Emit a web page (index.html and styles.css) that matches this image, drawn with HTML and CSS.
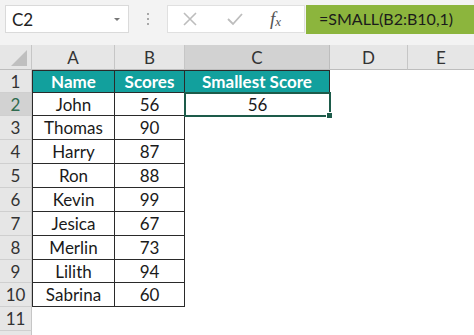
FILE: index.html
```html
<!DOCTYPE html>
<html lang="en">
<head>
    <meta charset="UTF-8">
    <title>SMALL function</title>
    <link rel="stylesheet" href="styles.css">
</head>
<body>
<div class="formula-bar">
    <div class="name-box">
        <span>C2</span>
        <span class="caret"></span>
    </div>
    <div class="grip"><i></i><i></i><i></i></div>
    <div class="fx-box">
        <svg class="icon" width="16" height="16" viewBox="0 0 16 16"><path d="M2 2 L14 14 M14 2 L2 14" stroke="#bdbdbd" stroke-width="1.6" fill="none"/></svg>
        <svg class="icon" width="18" height="16" viewBox="0 0 18 16"><path d="M2 8 L7 13 L16 3" stroke="#bdbdbd" stroke-width="1.8" fill="none"/></svg>
        <span class="fx">f<sub>x</sub></span>
    </div>
    <div class="formula">=SMALL(B2:B10,1)</div>
</div>

<div class="sheet">
    <div class="corner"><span></span></div>
    <div class="col-head">A</div>
    <div class="col-head">B</div>
    <div class="col-head active">C</div>
    <div class="col-head">D</div>
    <div class="col-head last">E</div>

    <div class="row-head">1</div>
    <div class="cell th first top">Name</div>
    <div class="cell th top">Scores</div>
    <div class="cell th top">Smallest Score</div>
    <div class="cell"></div>
    <div class="cell"></div>

    <div class="row-head active">2</div>
    <div class="cell td first">John</div>
    <div class="cell td">56</div>
    <div class="cell td selected">56</div>
    <div class="cell"></div>
    <div class="cell"></div>

    <div class="row-head">3</div>
    <div class="cell td first">Thomas</div>
    <div class="cell td">90</div>
    <div class="cell"></div><div class="cell"></div><div class="cell"></div>

    <div class="row-head">4</div>
    <div class="cell td first">Harry</div>
    <div class="cell td">87</div>
    <div class="cell"></div><div class="cell"></div><div class="cell"></div>

    <div class="row-head">5</div>
    <div class="cell td first">Ron</div>
    <div class="cell td">88</div>
    <div class="cell"></div><div class="cell"></div><div class="cell"></div>

    <div class="row-head">6</div>
    <div class="cell td first">Kevin</div>
    <div class="cell td">99</div>
    <div class="cell"></div><div class="cell"></div><div class="cell"></div>

    <div class="row-head">7</div>
    <div class="cell td first">Jesica</div>
    <div class="cell td">67</div>
    <div class="cell"></div><div class="cell"></div><div class="cell"></div>

    <div class="row-head">8</div>
    <div class="cell td first">Merlin</div>
    <div class="cell td">73</div>
    <div class="cell"></div><div class="cell"></div><div class="cell"></div>

    <div class="row-head">9</div>
    <div class="cell td first">Lilith</div>
    <div class="cell td">94</div>
    <div class="cell"></div><div class="cell"></div><div class="cell"></div>

    <div class="row-head">10</div>
    <div class="cell td first">Sabrina</div>
    <div class="cell td">60</div>
    <div class="cell"></div><div class="cell"></div><div class="cell"></div>

    <div class="row-head">11</div>
    <div class="cell"></div><div class="cell"></div><div class="cell"></div><div class="cell"></div><div class="cell"></div>

    <div class="row-head"></div>
    <div class="cell"></div><div class="cell"></div><div class="cell"></div><div class="cell"></div><div class="cell"></div>
</div>
</body>
</html>
```

FILE: styles.css
```css
* {
    margin: 0;
    padding: 0;
    box-sizing: border-box;
}

body {
    width: 474px;
    height: 335px;
    overflow: hidden;
    background: #ffffff;
    font-family: Lato, 'Open Sans', sans-serif;
    color: #1a1a1a;
}

/* formula bar */
.formula-bar {
    display: flex;
    height: 45px;
    padding-top: 5px;
    background: #f3f3f3;
}

.name-box {
    display: flex;
    align-items: center;
    justify-content: space-between;
    width: 124px;
    height: 28px;
    margin-left: 5px;
    padding: 0 8px 0 6px;
    background: #ffffff;
    border: 1px solid #dadada;
    font-size: 17px;
    color: #222;
}

.caret {
    width: 0;
    height: 0;
    border-left: 3px solid transparent;
    border-right: 3px solid transparent;
    border-top: 3px solid #777;
}

.grip {
    width: 38px;
    height: 28px;
    display: flex;
    flex-direction: column;
    align-items: center;
    justify-content: center;
    gap: 3px;
}

.grip i {
    width: 2px;
    height: 2px;
    background: #a8a8a8;
}

.fx-box {
    display: flex;
    align-items: center;
    width: 138px;
    height: 28px;
    padding-left: 14px;
    background: #ffffff;
    border: 1px solid #e0e0e0;
}

.fx-box .icon {
    margin-right: 28px;
}

.fx-box .icon + .icon {
    margin-right: 26px;
}

.fx {
    font-family: 'Liberation Serif', serif;
    font-style: italic;
    font-size: 19px;
    color: #555;
}

.fx sub {
    font-size: 13px;
    vertical-align: -1px;
}

.formula {
    flex: 1;
    height: 29px;
    margin-left: 1px;
    padding-left: 13px;
    background: #8cb53d;
    font-size: 16px;
    line-height: 28px;
    color: #1b1b1b;
}

/* sheet grid */
.sheet {
    display: grid;
    grid-template-columns: 32px 83px 70px 145px 78px 1fr;
    grid-template-rows: 25px 23px 23px 24px 24px 24px 24px 24px 24px 23px 24px 24px 20px;
}

.corner {
    position: relative;
    background: #e6e6e6;
    border-right: 1px solid #c6c6c6;
    border-bottom: 1px solid #bdbdbd;
}

.corner span {
    position: absolute;
    right: 4px;
    bottom: 3px;
    width: 0;
    height: 0;
    border-left: 16px solid transparent;
    border-bottom: 16px solid #bfbfbf;
}

.col-head {
    display: flex;
    align-items: center;
    justify-content: center;
    background: #e6e6e6;
    border-right: 1px solid #c6c6c6;
    border-bottom: 1px solid #bdbdbd;
    font-size: 17px;
    color: #333;
}

.col-head.active {
    background: #d2d2d2;
    border-right-color: #bdbdbd;
}

.col-head.last {
    border-right: none;
}

.row-head {
    display: flex;
    align-items: center;
    justify-content: center;
    background: #e6e6e6;
    border-right: 1px solid #c6c6c6;
    border-bottom: 1px solid #cfcfcf;
    font-size: 17px;
    color: #333;
}

.row-head.active {
    background: #d2d2d2;
    color: #2f6b4f;
}

.cell {
    display: flex;
    align-items: center;
    justify-content: center;
    font-size: 17px;
}

.th,
.td {
    border-right: 1px solid #2a2a2a;
    border-bottom: 1px solid #2a2a2a;
}

.th {
    background: #12a09d;
    color: #ffffff;
    font-weight: 700;
}

.first {
    border-left: 1px solid #2a2a2a;
}

.top {
    border-top: 1px solid #2a2a2a;
}

.selected {
    position: relative;
    border: none;
}

.selected::before {
    content: '';
    position: absolute;
    top: -1px;
    left: -1px;
    right: -1px;
    bottom: -1px;
    border: 2px solid #1d5b4a;
}

.selected::after {
    content: '';
    position: absolute;
    right: -3px;
    bottom: -3px;
    width: 5px;
    height: 5px;
    background: #1d5b4a;
    border: 1px solid #ffffff;
}
```
